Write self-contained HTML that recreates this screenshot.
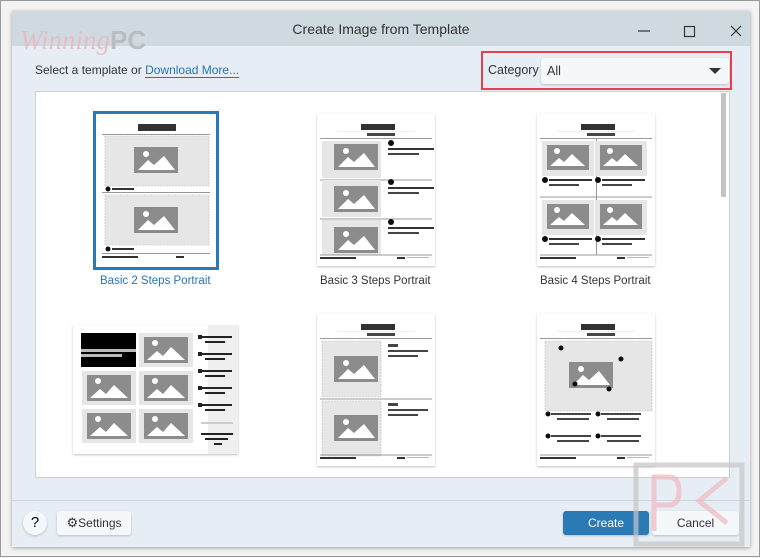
<!DOCTYPE html>
<html><head><meta charset="utf-8"><style>
*{margin:0;padding:0;box-sizing:border-box}
body{width:760px;height:557px;background:#f3f3f3;border:1px solid #9a9a9a;position:relative;overflow:hidden;font-family:"Liberation Sans",sans-serif}
.dlg{position:absolute;left:11px;top:10px;width:738px;height:536px;background:#e6edf4;box-shadow:0 1px 4px rgba(0,0,0,.35)}
.tb{position:absolute;left:0;top:0;width:738px;height:35px;background:#cfdae0}
.t{position:absolute;left:0;right:0;top:10px;text-align:center;font-size:14px;color:#333}
.abs{position:absolute}
.lbl{font-size:12px;color:#333}
.btn{position:absolute;top:500px;height:24px;border-radius:3px;font-size:12px;text-align:center;line-height:24px;box-shadow:0 1px 2px rgba(0,0,0,.2)}
.cap{font-size:11.5px}
</style></head><body>
<div class="dlg">
 <div class="tb"><div class="t">Create Image from Template</div>
  <svg class="abs" style="left:580px;top:12px" width="158" height="16"><line x1="46" y1="8" x2="58" y2="8" stroke="#333" stroke-width="1.2"/><rect x="92.5" y="3.5" width="10" height="10" fill="none" stroke="#333" stroke-width="1.2"/><path d="M139 3L149 13M149 3L139 13" stroke="#333" stroke-width="1.2"/></svg>
 </div>
 <div class="abs" style="left:8px;top:14px;font:italic 27px 'Liberation Serif',serif;color:#e9b9bd;opacity:.85">Winning<span style="font:bold 26px 'Liberation Sans',sans-serif;color:#b3b8bc;font-style:normal">PC</span></div>
 <div class="abs lbl" style="left:23px;top:52px">Select a template or <span style="color:#2476b4;border-bottom:1px solid #2476b4">Download More...</span></div>
 <div class="abs" style="left:469px;top:40px;width:251px;height:39px;border:2px solid #e8404a"></div>
 <div class="abs lbl" style="left:476px;top:52px;font-size:12.5px">Category</div>
 <div class="abs" style="left:529px;top:47px;width:188px;height:26px;background:#f5f8fb;border-radius:3px;box-shadow:0 1px 2px rgba(0,0,0,.2)"><span class="abs lbl" style="left:6px;top:6px;font-size:12.5px">All</span><svg class="abs" style="left:168px;top:9px" width="12" height="8"><path d="M0 1H12L6 7Z" fill="#333"/></svg></div>
 <div class="abs" style="left:23px;top:80px;width:695px;height:387px;background:#fff;border:1px solid #c9d2da"></div>
 <div class="abs" style="left:709px;top:82px;width:5px;height:104px;background:#c4c4c4"></div>
 <div class="abs" style="left:0;top:489px;width:738px;height:1px;background:#cdd6de"></div>
 <div class="btn" style="left:11px;width:24px;border-radius:12px;background:#f5f8fb;font-size:15px">?</div>
 <div class="btn" style="left:45px;width:74px;background:#f5f8fb;color:#333"><span style="font-size:13px">⚙</span>Settings</div>
 <div class="btn" style="left:551px;width:86px;background:#2a7ab5;color:#fff">Create</div>
 <div class="btn" style="left:640px;width:87px;background:#f5f8fb;color:#333">Cancel</div>
 <div class="abs cap" style="left:88px;top:264px;color:#2476b4">Basic 2 Steps Portrait</div>
 <div class="abs cap" style="left:308px;top:264px;color:#333">Basic 3 Steps Portrait</div>
 <div class="abs cap" style="left:528px;top:264px;color:#333">Basic 4 Steps Portrait</div>
</div>
<svg class="abs" style="left:0;top:0" width="760" height="557">
<defs>
 <g id="ic"><rect width="44" height="26" fill="#8c8c8c"/><circle cx="12" cy="7" r="3" fill="#fff"/><path d="M4 23L14 13L20 18L30 9L41 23Z" fill="#fff"/></g>
 <g id="hd"><rect x="44" y="10" width="34" height="6" fill="#333"/><line x1="20" y1="17.5" x2="98" y2="17.5" stroke="#ddd" stroke-width=".6"/><rect x="50" y="19" width="28" height="3" fill="#444"/><line x1="3" y1="24.5" x2="115" y2="24.5" stroke="#999"/></g>
 <g id="ft"><line x1="3" y1="141" x2="115" y2="141" stroke="#999"/><rect x="3" y="143" width="36" height="2" fill="#333"/><rect x="80" y="143" width="8" height="2" fill="#333"/><rect x="90" y="143" width="22" height="1" fill="#bbb"/></g>
 <filter id="sh"><feDropShadow dx="0" dy="1" stdDeviation="1" flood-opacity=".25"/></filter>
</defs>
<rect x="93.5" y="111.5" width="123" height="156" fill="none" stroke="#2a7ab5" stroke-width="3"/>
<g transform="translate(97,115)"><rect width="116" height="150" fill="#fff"/>
 <rect x="40" y="8" width="38" height="7" fill="#333"/><line x1="4" y1="18.5" x2="112" y2="18.5" stroke="#999"/>
 <rect x="7" y="20" width="104" height="50" fill="#e6e6e6" stroke="#bbb" stroke-dasharray="2,1" stroke-width=".6"/><use href="#ic" x="36" y="31"/>
 <circle cx="10" cy="73" r="2.5" fill="#111"/><rect x="14" y="72" width="22" height="2" fill="#333"/><line x1="4" y1="76.5" x2="112" y2="76.5" stroke="#999"/>
 <rect x="7" y="79" width="104" height="50" fill="#e6e6e6" stroke="#bbb" stroke-dasharray="2,1" stroke-width=".6"/><use href="#ic" x="36" y="91"/>
 <circle cx="10" cy="133" r="2.5" fill="#111"/><rect x="14" y="132" width="22" height="2" fill="#333"/>
 <line x1="4" y1="137.5" x2="112" y2="137.5" stroke="#999"/><rect x="4" y="140" width="36" height="2" fill="#333"/><rect x="78" y="140" width="8" height="2" fill="#333"/></g>
<g transform="translate(316,113)" filter="url(#sh)"><rect width="118" height="152" fill="#fff"/><use href="#hd"/>
 <g><rect x="5" y="27" width="59" height="37" fill="#e6e6e6"/><use href="#ic" x="17" y="30"/><circle cx="74" cy="29" r="3" fill="#111"/><rect x="71" y="34" width="46" height="2" fill="#333"/><rect x="71" y="39" width="31" height="2" fill="#444"/></g>
 <line x1="3" y1="66" x2="115" y2="66" stroke="#999"/>
 <g transform="translate(0,39)"><rect x="5" y="27" width="59" height="37" fill="#e6e6e6"/><use href="#ic" x="17" y="33"/><circle cx="74" cy="29" r="3" fill="#111"/><rect x="71" y="34" width="46" height="2" fill="#333"/><rect x="71" y="39" width="31" height="2" fill="#444"/></g>
 <line x1="3" y1="105" x2="115" y2="105" stroke="#999"/>
 <g transform="translate(0,79)"><rect x="5" y="27" width="59" height="35" fill="#e6e6e6"/><use href="#ic" x="17" y="34"/><circle cx="74" cy="29" r="3" fill="#111"/><rect x="71" y="34" width="46" height="2" fill="#333"/><rect x="71" y="39" width="31" height="2" fill="#444"/></g>
 <use href="#ft"/></g>
<g transform="translate(536,113)" filter="url(#sh)"><rect width="118" height="152" fill="#fff"/><use href="#hd"/>
 <line x1="59.5" y1="25" x2="59.5" y2="141" stroke="#999"/><line x1="3" y1="83" x2="115" y2="83" stroke="#999"/>
 <g><rect x="5" y="27" width="52" height="35" fill="#e6e6e6"/><rect x="10" y="31" width="42" height="25" fill="#8c8c8c"/><circle cx="20" cy="37" r="3" fill="#fff"/><path d="M13 52L22 44L27 48L35 40L48 52Z" fill="#fff"/><circle cx="8" cy="66" r="3" fill="#111"/><rect x="12" y="65" width="43" height="2" fill="#333"/><rect x="12" y="70" width="30" height="2" fill="#444"/></g>
 <g transform="translate(53,0)"><rect x="5" y="27" width="52" height="35" fill="#e6e6e6"/><rect x="10" y="31" width="42" height="25" fill="#8c8c8c"/><circle cx="20" cy="37" r="3" fill="#fff"/><path d="M13 52L22 44L27 48L35 40L48 52Z" fill="#fff"/><circle cx="8" cy="66" r="3" fill="#111"/><rect x="12" y="65" width="43" height="2" fill="#333"/><rect x="12" y="70" width="30" height="2" fill="#444"/></g>
 <g transform="translate(0,59)"><rect x="5" y="27" width="52" height="35" fill="#e6e6e6"/><rect x="10" y="31" width="42" height="25" fill="#8c8c8c"/><circle cx="20" cy="37" r="3" fill="#fff"/><path d="M13 52L22 44L27 48L35 40L48 52Z" fill="#fff"/><circle cx="8" cy="66" r="3" fill="#111"/><rect x="12" y="65" width="43" height="2" fill="#333"/><rect x="12" y="70" width="30" height="2" fill="#444"/></g>
 <g transform="translate(53,59)"><rect x="5" y="27" width="52" height="35" fill="#e6e6e6"/><rect x="10" y="31" width="42" height="25" fill="#8c8c8c"/><circle cx="20" cy="37" r="3" fill="#fff"/><path d="M13 52L22 44L27 48L35 40L48 52Z" fill="#fff"/><circle cx="8" cy="66" r="3" fill="#111"/><rect x="12" y="65" width="43" height="2" fill="#333"/><rect x="12" y="70" width="30" height="2" fill="#444"/></g>
 <use href="#ft"/></g>
<g transform="translate(72,324)" filter="url(#sh)"><rect width="165" height="129" fill="#fff"/><rect x="135" y="0" width="30" height="129" fill="#efefef"/>
 <rect x="8" y="8" width="55" height="34" fill="#000"/><rect x="8" y="24" width="55" height="3" fill="#bbb"/><rect x="8" y="29" width="41" height="3" fill="#bbb"/>
 <g><rect x="66" y="8" width="54" height="34" fill="#e6e6e6"/><rect x="71" y="12" width="44" height="26" fill="#8c8c8c"/><circle cx="82" cy="18" r="3" fill="#fff"/><path d="M74 35L84 26L90 31L98 22L112 35Z" fill="#fff"/></g>
 <g transform="translate(-57,38)"><rect x="66" y="8" width="54" height="34" fill="#e6e6e6"/><rect x="71" y="12" width="44" height="26" fill="#8c8c8c"/><circle cx="82" cy="18" r="3" fill="#fff"/><path d="M74 35L84 26L90 31L98 22L112 35Z" fill="#fff"/></g>
 <g transform="translate(0,38)"><rect x="66" y="8" width="54" height="34" fill="#e6e6e6"/><rect x="71" y="12" width="44" height="26" fill="#8c8c8c"/><circle cx="82" cy="18" r="3" fill="#fff"/><path d="M74 35L84 26L90 31L98 22L112 35Z" fill="#fff"/></g>
 <g transform="translate(-57,76)"><rect x="66" y="8" width="54" height="34" fill="#e6e6e6"/><rect x="71" y="12" width="44" height="26" fill="#8c8c8c"/><circle cx="82" cy="18" r="3" fill="#fff"/><path d="M74 35L84 26L90 31L98 22L112 35Z" fill="#fff"/></g>
 <g transform="translate(0,76)"><rect x="66" y="8" width="54" height="34" fill="#e6e6e6"/><rect x="71" y="12" width="44" height="26" fill="#8c8c8c"/><circle cx="82" cy="18" r="3" fill="#fff"/><path d="M74 35L84 26L90 31L98 22L112 35Z" fill="#fff"/></g>
 <g fill="#222"><rect x="125" y="10" width="4" height="4"/><rect x="129" y="11" width="30" height="2"/><rect x="132" y="16" width="20" height="2"/>
 <rect x="125" y="27" width="4" height="4"/><rect x="129" y="28" width="30" height="2"/><rect x="132" y="33" width="20" height="2"/>
 <rect x="125" y="44" width="4" height="4"/><rect x="129" y="45" width="30" height="2"/><rect x="132" y="50" width="20" height="2"/>
 <rect x="125" y="61" width="4" height="4"/><rect x="129" y="62" width="30" height="2"/><rect x="132" y="67" width="20" height="2"/>
 <rect x="125" y="78" width="4" height="4"/><rect x="129" y="79" width="30" height="2"/><rect x="132" y="84" width="20" height="2"/>
 <rect x="128" y="108" width="32" height="2"/><rect x="132" y="113" width="23" height="2"/><rect x="141" y="118" width="8" height="2"/></g>
 <rect x="128" y="97" width="32" height="2" fill="#ccc"/></g>
<g transform="translate(316,313)" filter="url(#sh)"><rect width="118" height="152" fill="#fff"/><use href="#hd"/>
 <rect x="5" y="27" width="59" height="56" fill="#e6e6e6" stroke="#bbb" stroke-dasharray="2,1" stroke-width=".6"/><use href="#ic" x="17" y="42"/>
 <line x1="3" y1="85" x2="115" y2="85" stroke="#999"/>
 <rect x="5" y="87" width="59" height="55" fill="#e6e6e6" stroke="#bbb" stroke-dasharray="2,1" stroke-width=".6"/><use href="#ic" x="17" y="101"/>
 <g fill="#444"><rect x="71" y="30" width="10" height="3"/><rect x="71" y="36" width="40" height="2"/><rect x="71" y="41" width="30" height="2"/><rect x="71" y="89" width="10" height="3"/><rect x="71" y="95" width="40" height="2"/><rect x="71" y="100" width="30" height="2"/></g>
 <use href="#ft"/></g>
<g transform="translate(536,313)" filter="url(#sh)"><rect width="118" height="152" fill="#fff"/><use href="#hd"/>
 <rect x="8" y="27" width="107" height="70" fill="#e6e6e6" stroke="#bbb" stroke-dasharray="2,1" stroke-width=".6"/><use href="#ic" x="32" y="48"/>
 <g fill="#111"><circle cx="24" cy="34" r="2.5"/><circle cx="84" cy="45" r="2.5"/><circle cx="38" cy="70" r="2.5"/><circle cx="72" cy="75" r="2.5"/>
 <circle cx="11" cy="100" r="2.5"/><circle cx="61" cy="100" r="2.5"/><circle cx="11" cy="122" r="2.5"/><circle cx="61" cy="122" r="2.5"/></g>
 <g fill="#444"><rect x="14" y="99" width="40" height="2"/><rect x="20" y="104" width="32" height="2"/><rect x="64" y="99" width="40" height="2"/><rect x="70" y="104" width="32" height="2"/>
 <rect x="14" y="121" width="40" height="2"/><rect x="20" y="126" width="32" height="2"/><rect x="64" y="121" width="40" height="2"/><rect x="70" y="126" width="32" height="2"/></g>
 <use href="#ft"/></g>
<rect x="635" y="464" width="106" height="79" fill="none" stroke="#c4c4c4" stroke-width="5" opacity=".7"/>
<path d="M653 530V476H668Q678 476 678 490Q678 504 668 504H653" fill="none" stroke="#f0b8c0" stroke-width="5" opacity=".7"/>
<path d="M726 477L698 500L726 522" fill="none" stroke="#f0b8c0" stroke-width="5" opacity=".7"/>
</svg>
</body></html>
